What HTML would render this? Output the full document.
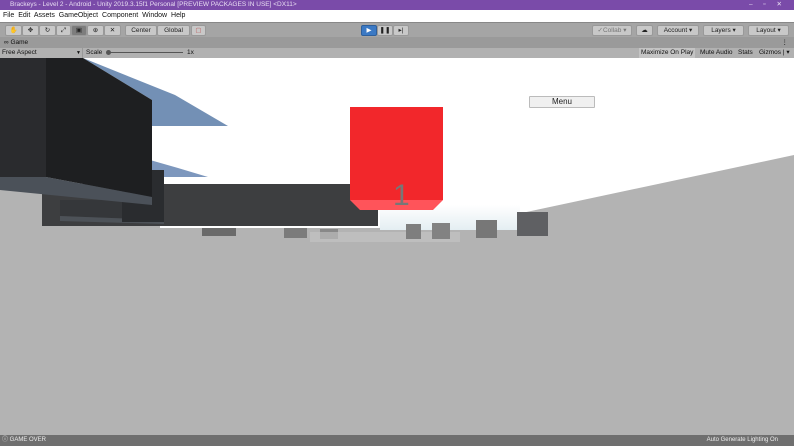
<!DOCTYPE html>
<html><head><meta charset="utf-8"><style>
*{margin:0;padding:0;box-sizing:border-box}
body{width:794px;height:446px;overflow:hidden;font-family:"Liberation Sans",sans-serif;font-size:7px;color:#111;background:#b3b3b3;position:relative}
.abs{position:absolute}
.title{left:0;top:0;width:794px;height:10px;background:#7a4ba9;color:#e8ddf2;font-size:6.5px;line-height:10px;padding-left:10px}
.menu{left:0;top:10px;width:794px;height:12px;background:#fff;font-size:7px;line-height:12px;padding-left:3px;word-spacing:2px}
.tb{left:0;top:22px;width:794px;height:15px;background:#a5a5a5;border-top:1px solid #888}
.btn{position:absolute;top:2px;height:11px;background:#c8c8c8;border:1px solid #999;border-radius:2px;font-size:6.5px;line-height:9px;text-align:center;color:#222}
.tab{left:0;top:37px;width:794px;height:11px;background:#9a9a9a;font-size:6.5px;line-height:11px;padding-left:4px}
.gt{left:0;top:48px;width:794px;height:10px;background:#b1b1b1;font-size:6.5px;line-height:10px}
.status{left:0;top:435px;width:794px;height:11px;background:#6f6f6f;color:#eee;font-size:6px;line-height:11px}
</style></head><body>
<div class="abs title">Brackeys - Level 2 - Android - Unity 2019.3.15f1 Personal [PREVIEW PACKAGES IN USE] &lt;DX11&gt;<span style="position:absolute;right:12px">–&nbsp;&nbsp;&nbsp;&nbsp;&nbsp;&nbsp;▫&nbsp;&nbsp;&nbsp;&nbsp;&nbsp;&nbsp;✕</span></div>
<div class="abs menu">File Edit Assets GameObject Component Window Help</div>
<div class="abs tb">
<div class="btn" style="left:5px;width:17px">✋</div>
<div class="btn" style="left:22px;width:17px">✥</div>
<div class="btn" style="left:39px;width:17px">↻</div>
<div class="btn" style="left:56px;width:15px">⤢</div>
<div class="btn" style="left:71px;width:16px;background:#7d7d7d">▣</div>
<div class="btn" style="left:87px;width:17px">⊕</div>
<div class="btn" style="left:104px;width:17px">✕</div>
<div class="btn" style="left:125px;width:32px">Center</div>
<div class="btn" style="left:157px;width:33px">Global</div>
<div class="btn" style="left:191px;width:15px;color:#b55">▢</div>
<div class="btn" style="left:361px;width:16px;background:#3b79c4;color:#fff;border-color:#2d5f9c">▶</div>
<div class="btn" style="left:377px;width:16px">❚❚</div>
<div class="btn" style="left:393px;width:16px">▸|</div>
<div class="btn" style="left:592px;width:40px;color:#777">✓Collab ▾</div>
<div class="btn" style="left:636px;width:17px">☁</div>
<div class="btn" style="left:657px;width:42px">Account ▾</div>
<div class="btn" style="left:703px;width:41px">Layers ▾</div>
<div class="btn" style="left:748px;width:41px">Layout ▾</div>
</div>
<div class="abs tab">∞ Game<span style="position:absolute;right:6px">⋮</span></div>
<div class="abs gt"><span style="position:absolute;left:2px">Free Aspect</span><span style="position:absolute;left:76px;font-size:5px">▼</span>
<div style="position:absolute;left:82px;top:0;width:1px;height:10px;background:#999"></div>
<span style="position:absolute;left:86px">Scale</span>
<div style="position:absolute;left:108px;top:4px;width:75px;height:1px;background:#555"></div>
<div style="position:absolute;left:106px;top:2px;width:5px;height:5px;border-radius:50%;background:#555"></div>
<span style="position:absolute;left:187px">1x</span>
<span style="position:absolute;left:639px;background:#c4c4c4;padding:0 2px">Maximize On Play</span>
<span style="position:absolute;left:699px;padding:0 1px">Mute Audio</span>
<span style="position:absolute;left:738px">Stats</span>
<span style="position:absolute;left:759px">Gizmos | ▾</span>
</div>
<svg class="abs" style="left:0;top:58px" width="794" height="377" viewBox="0 58 794 377">
<defs><linearGradient id="g" x1="0" y1="0" x2="0" y2="1"><stop offset="0" stop-color="#fff"/><stop offset="1" stop-color="#e4eef2"/></linearGradient></defs>
<rect x="0" y="58" width="794" height="377" fill="#b3b3b3"/>
<polygon points="0,58 794,58 794,155 517,214 378,228 160,228 160,177 0,177" fill="#fff"/>
<rect x="380" y="205" width="140" height="25" fill="url(#g)"/>
<polygon points="83,58 175,95 228,126 152,126 152,100" fill="#7390b5"/>
<polygon points="150,160 178,168 208,177 150,177" fill="#7d97bd"/>
<rect x="42" y="184" width="336" height="42" fill="#3d3e40"/>
<polygon points="60,200 122,200 164,212 164,220 60,216" fill="#35373a"/>
<polygon points="60,216 164,220 164,224 60,221" fill="#4d5258"/>
<rect x="122" y="170" width="42" height="52" fill="#2a2c2f"/>
<polygon points="0,58 83,58 152,100 152,197 46,177 0,177" fill="#1e1f21"/>
<polygon points="0,58 46,58 46,177 0,177" fill="#2a2b2e"/>
<polygon points="0,177 46,177 152,197 152,205 0,190" fill="#4b5159"/>
<rect x="350" y="107" width="93" height="93" fill="#f2272b"/>
<polygon points="350,200 443,200 433,210 360,210" fill="#ff545a"/>
<text x="393" y="205" font-family="Liberation Sans,sans-serif" font-size="30" fill="#777" font-weight="100">1</text>
<rect x="202" y="228" width="34" height="8" fill="#6a6a6a"/>
<rect x="284" y="228" width="23" height="10" fill="#7b7b7b"/>
<rect x="320" y="229" width="18" height="10" fill="#888"/>
<rect x="310" y="232" width="150" height="10" fill="#c5c5c5" opacity="0.6"/>
<rect x="406" y="224" width="15" height="15" fill="#7e7e7e"/>
<rect x="432" y="223" width="18" height="16" fill="#828282"/>
<rect x="476" y="220" width="21" height="18" fill="#777"/>
<rect x="517" y="212" width="31" height="24" fill="#5f6063"/>
</svg>
<div class="abs" style="left:529px;top:96px;width:66px;height:12px;background:#f0f0f0;border:1px solid #bbb;border-radius:1px;text-align:center;font-size:8px;line-height:10px;color:#222">Menu</div>
<div class="abs status"><span style="position:absolute;left:2px">ⓘ GAME OVER</span><span style="position:absolute;right:16px">Auto Generate Lighting On</span></div>
</body></html>
